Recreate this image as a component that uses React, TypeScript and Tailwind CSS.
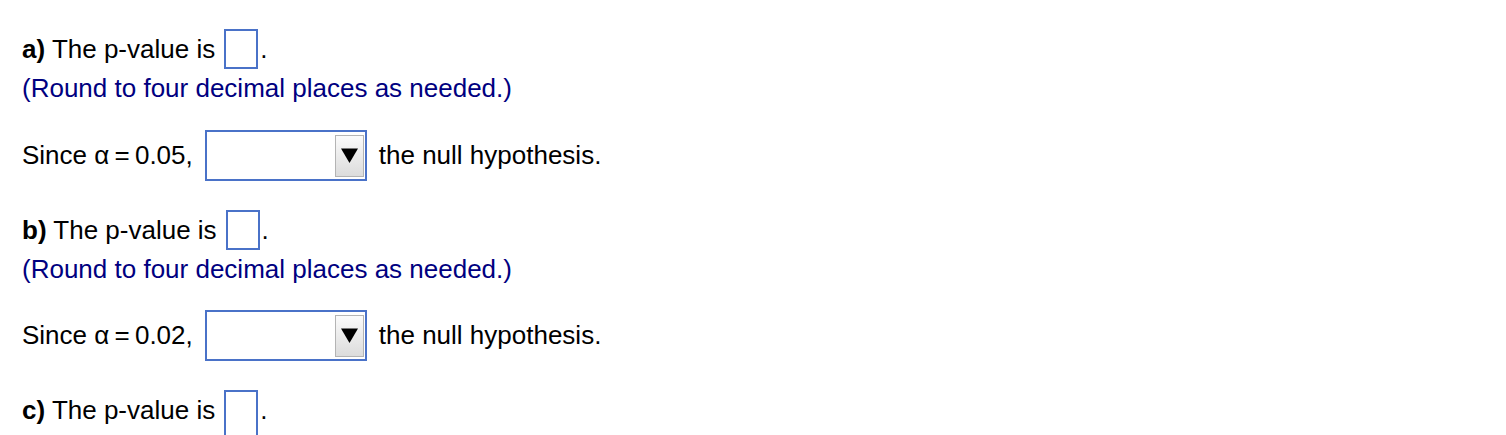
import type { ReactNode } from "react";

const AnswerBox = ({ tall = false }: { tall?: boolean }) => (
  <span
    className={`block w-[34px] border-2 border-[#4a72c8] bg-white ${tall ? "h-[50px]" : "h-[40px]"}`}
  />
);

const DropDown = () => (
  <span className="flex h-[51px] w-[162px] items-center justify-end border-2 border-[#4a72c8] bg-white pr-[1px]">
    <span className="flex h-[42px] w-[29px] items-center justify-center border border-[#b4b4b4] bg-gradient-to-b from-[#fbfbfb] to-[#dcdcdc]">
      <svg width="19" height="17" viewBox="0 0 19 17">
        <path d="M1 1.5 H18 L9.5 16 Z" fill="#000" />
      </svg>
    </span>
  </span>
);

const PValueRow = ({
  label,
  tall = false,
  className = "",
}: {
  label: string;
  tall?: boolean;
  className?: string;
}) => (
  <div className={`flex items-start leading-[40px] ${className}`}>
    <span>
      <b>{label}</b> The p-value is
    </span>
    <span className="ml-[9px]">
      <AnswerBox tall={tall} />
    </span>
    <span className="ml-[2px]">.</span>
  </div>
);

const RoundNote = ({ children }: { children: ReactNode }) => (
  <p className="mt-[3px] leading-[32px] text-[#000080]">{children}</p>
);

const SinceRow = ({ alpha, className = "" }: { alpha: string; className?: string }) => (
  <div className={`flex h-[51px] items-center ${className}`}>
    <span>Since α{"\u2009"}={"\u2009"}{alpha},</span>
    <span className="ml-[12px]">
      <DropDown />
    </span>
    <span className="ml-[12px]">the null hypothesis.</span>
  </div>
);

export default function App() {
  return (
    <div
      className="h-[435px] w-[1506px] overflow-hidden bg-white pl-[22px] pt-[29px] text-[26px] text-black"
      style={{ fontFamily: '"Liberation Sans", Arial, sans-serif' }}
    >
      <PValueRow label="a)" />
      <RoundNote>(Round to four decimal places as needed.)</RoundNote>
      <SinceRow alpha="0.05" className="mt-[26px]" />

      <PValueRow label="b)" className="mt-[29px]" />
      <RoundNote>(Round to four decimal places as needed.)</RoundNote>
      <SinceRow alpha="0.02" className="mt-[25px]" />

      <PValueRow label="c)" tall className="mt-[29px]" />
    </div>
  );
}
